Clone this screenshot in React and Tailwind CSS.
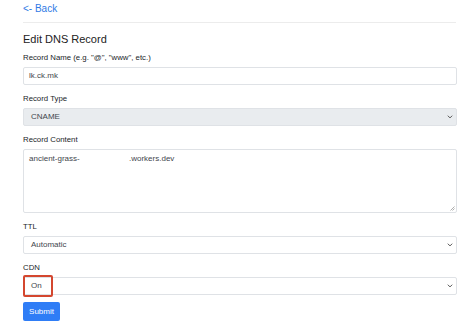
import React from "react";

const font = { fontFamily: '"Liberation Sans", Arial, Helvetica, sans-serif' };

function Chevron() {
  return (
    <svg width="6" height="5" viewBox="0 0 6 5" className="absolute right-[3px] top-1/2 -translate-y-1/2">
      <path d="M0.8 1.2 L3 3.4 L5.2 1.2" fill="none" stroke="#555" strokeWidth="1" />
    </svg>
  );
}

function Label({ children }) {
  return (
    <div className="h-[10px] leading-[10px] text-[7.8px] text-[#212529] mb-[4px]">{children}</div>
  );
}

function SelectBox({ value, disabled }) {
  return (
    <div
      className={`relative h-[18px] rounded-[2px] border border-[#dfe2e6] flex items-center pl-[7px] text-[8px] text-[#3f464d] ${
        disabled ? "bg-[#e9ecef]" : "bg-white"
      }`}
    >
      {value}
      <Chevron />
    </div>
  );
}

export default function App() {
  return (
    <div className="w-[474px] h-[334px] bg-white overflow-hidden" style={font}>
      <div className="pl-[23px] w-[457px]">
        <div className="pt-[3px] h-[17px] leading-[12px] text-[10px] text-[#2f7ae5]">&lt;- Back</div>
        <div className="mt-[5px] h-px bg-[#ececec] w-[433px]" />
        <div className="mt-[9px] h-[14px] leading-[14px] text-[11px] text-[#222] mb-[7px]">Edit DNS Record</div>

        <div className="mb-[9px]">
          <Label>Record Name (e.g. "@", "www", etc.)</Label>
          <div className="h-[18px] rounded-[2px] border border-[#dfe2e6] bg-white flex items-center pl-[5px] text-[8px] text-[#3f464d]">
            lk.ck.mk
          </div>
        </div>

        <div className="mb-[9px]">
          <Label>Record Type</Label>
          <SelectBox value="CNAME" disabled />
        </div>

        <div className="mb-[9px]">
          <Label>Record Content</Label>
          <div className="relative h-[64px] rounded-[2px] border border-[#dfe2e6] bg-white pl-[5px] pt-[4px] text-[8px] leading-[10px] text-[#3f464d] flex">
            <span className="w-[100px]">ancient-grass-</span>
            <span>.workers.dev</span>
            <svg width="5" height="5" viewBox="0 0 5 5" className="absolute right-[1px] bottom-[1px]">
              <path d="M4.5 0.5 L0.5 4.5 M4.5 2.5 L2.5 4.5" stroke="#999" strokeWidth="0.8" />
            </svg>
          </div>
        </div>

        <div className="mb-[9px]">
          <Label>TTL</Label>
          <SelectBox value="Automatic" />
        </div>

        <div className="mb-[7px]">
          <Label>CDN</Label>
          <div className="relative">
            <SelectBox value="On" />
            <div className="absolute left-0 top-[-2px] w-[30px] h-[22px] border-2 border-[#d4472f] rounded-[2px]" />
          </div>
        </div>

        <div className="w-[37px] h-[19px] rounded-[2px] bg-[#2f7df6] text-white text-[8px] flex items-center justify-center">
          Submit
        </div>
      </div>
    </div>
  );
}
